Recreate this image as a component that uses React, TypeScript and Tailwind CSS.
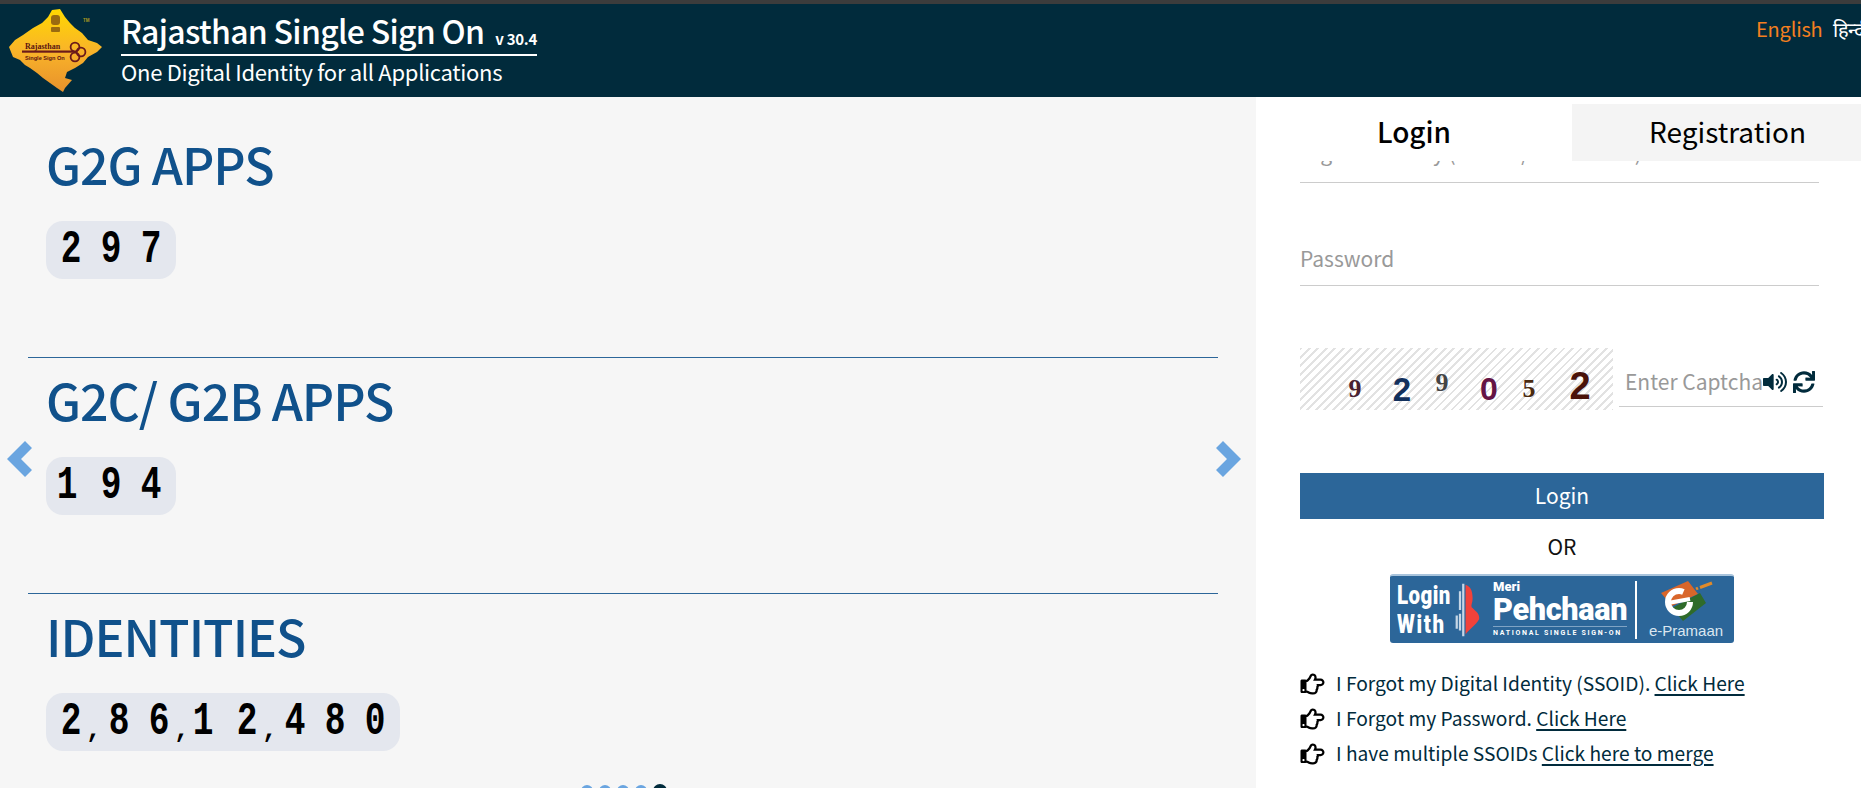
import { FaRegHandPointRight, FaSync, FaVolumeUp } from "react-icons/fa";

const stats = [
  { title: "G2G APPS", count: "297" },
  { title: "G2C/ G2B APPS", count: "194" },
  { title: "IDENTITIES", count: "2,86,12,480" },
];

const captcha = [
  { ch: "9", cls: "w-[46px] text-[26px] font-['Liberation_Serif'] text-[#4a2130]" },
  { ch: "2", cls: "w-[48px] text-[33px] font-['Liberation_Sans'] text-[#12305c]" },
  { ch: "9", cls: "w-[32px] text-[26px] font-['Liberation_Serif'] text-[#444444] -translate-y-[6px]" },
  { ch: "0", cls: "w-[62px] text-[32px] font-['Liberation_Sans'] text-[#641445]" },
  { ch: "5", cls: "w-[18px] text-[26px] font-['Liberation_Serif'] text-[#4a2a10]" },
  { ch: "2", cls: "w-[84px] text-[38px] font-['Liberation_Sans'] text-[#4a130a] -translate-y-[3px]" },
];

const help = [
  { text: "I Forgot my Digital Identity (SSOID).", link: "Click Here" },
  { text: "I Forgot my Password.", link: "Click Here" },
  { text: "I have multiple SSOIDs", link: "Click here to merge" },
];

function RajasthanLogo() {
  return (
    <svg viewBox="0 4 120 93" className="w-[120px] h-[93px] shrink-0">
      <defs>
        <linearGradient id="map" x1="0" y1="0" x2="0" y2="1">
          <stop offset="0" stopColor="#ffd800" />
          <stop offset="0.5" stopColor="#f9b429" />
          <stop offset="1" stopColor="#e8912c" />
        </linearGradient>
      </defs>
      <path
        d="M52 10 L60 9 L65 17 L70 23 L75 28 L82 33 L88 40 L97 43 L102 47 L97 52 L88 57 L83 63 L75 68 L67 72 L65 78 L72 80 L65 88 L63 92 L57 88 L50 83 L43 78 L37 73 L30 68 L25 65 L20 60 L13 57 L9 47 L15 40 L23 35 L33 28 L42 23 L48 17 Z"
        fill="url(#map)"
      />
      <rect x="51" y="15" width="9" height="10" rx="3" fill="#9a6b10" />
      <rect x="51" y="27" width="9" height="5" rx="1" fill="#9a6b10" />
      <text x="25" y="49" fontSize="8" fontWeight="700" fill="#5a1410" fontFamily="Liberation Serif">Rajasthan</text>
      <rect x="22" y="50.5" width="52" height="2.2" fill="#6b1a1a" />
      <text x="25" y="60" fontSize="5.6" fontWeight="700" fill="#5a1410" fontFamily="Liberation Sans">Single Sign On</text>
      <circle cx="75" cy="47" r="4.4" fill="none" stroke="#6b1a1a" strokeWidth="1.8" />
      <circle cx="81" cy="52" r="4.4" fill="none" stroke="#6b1a1a" strokeWidth="1.8" />
      <circle cx="75" cy="57" r="4.4" fill="none" stroke="#6b1a1a" strokeWidth="1.8" />
      <text x="83" y="22" fontSize="4.5" fontWeight="700" fill="#a89a20" fontFamily="Liberation Sans">TM</text>
    </svg>
  );
}

function Counter({ value }: { value: string }) {
  return (
    <div className="flex w-fit h-[58px] items-center rounded-[17px] bg-[#e4e7ee] px-[5px] font-['Liberation_Mono'] text-[46px] font-bold text-black">
      {value.split("").map((ch, i) =>
        ch === "," ? (
          <span key={i} className="w-[8px] text-[26px] text-center translate-y-[8px] -translate-x-[5px]">
            ,
          </span>
        ) : (
          <span key={i} className={`w-[40px] text-center scale-x-75 leading-none ${ch === "1" ? "-translate-x-[4px]" : ""}`}>
            {ch}
          </span>
        )
      )}
    </div>
  );
}

function MeriPehchaan() {
  return (
    <div className="flex w-[344px] h-[69px] items-center rounded-[3px] border-t-2 border-[#a9c4dc] bg-[#2c6699] pl-[7px] font-['Roboto'] text-white">
      <div className="w-[56px] text-[25px] font-black leading-[29px] tracking-[0.5px] scale-x-[0.82] origin-left">
        <div>Login</div>
        <div className="tracking-[2px]">With</div>
      </div>
      <svg viewBox="0 0 30 60" className="w-[28px] h-[58px]">
        <path d="M11 2 L11 58 M7.5 10 L7.5 30 M7.5 34 L7.5 52 M4 36 L4 50" stroke="#c6d6e6" strokeWidth="2.4" />
        <path d="M13.5 3 C20 5 21 12 21 18 C21 22 19 25 20 27 C24 31 29 34 28 40 C24 47 18 50 13.5 56 Z" fill="#f2423a" />
      </svg>
      <div className="ml-[12px] w-[134px]">
        <div className="text-[13px] font-black leading-[13px]">Meri</div>
        <div className="text-[32px] font-black leading-[33px] tracking-[-0.4px] scale-x-[0.96] origin-left whitespace-nowrap">Pehchaan</div>
        <div className="border-t border-[#7fa3c4] text-[7px] font-bold leading-[12px] tracking-[1.7px] whitespace-nowrap">NATIONAL SINGLE SIGN-ON</div>
      </div>
      <div className="ml-[8px] h-[58px] w-[2px] bg-white" />
      <div className="ml-[10px] flex w-[78px] flex-col items-center font-['Liberation_Sans']">
        <svg viewBox="0 0 56 42" className="h-[42px] w-[56px]">
          <path d="M3 13 L30 1 L40 14 L14 26 Z" fill="#d9662a" />
          <path d="M14 28 L42 13 L48 23 L25 41 Z" fill="#2f6b2a" />
          <path d="M38 9 L40 8 M42 7.5 L54 3" stroke="#e08a2a" strokeWidth="3" />
          <circle cx="21" cy="22" r="11" fill="none" stroke="#ffffff" strokeWidth="6" strokeDasharray="56 14" />
          <path d="M10 23 L32 19" stroke="#ffffff" strokeWidth="4" />
        </svg>
        <div className="text-[15px] leading-[17px] text-[#dbe6f0] whitespace-nowrap">e-Pramaan</div>
      </div>
    </div>
  );
}

export default function App() {
  return (
    <div className="relative h-[788px] w-full overflow-hidden bg-white font-['Noto_Sans_CJK_JP',sans-serif]">
      <div className="h-[4px] bg-[#3c3c3c]" />
      <header className="flex h-[93px] bg-[#012b3c] text-white">
        <RajasthanLogo />
        <div className="ml-[1px] w-[416px]">
          <div className="flex h-[52px] items-end justify-between border-b-2 border-white">
            <span className="mb-[2px] text-[32px] font-medium leading-[44px] tracking-[-0.7px] whitespace-nowrap">Rajasthan Single Sign On</span>
            <span className="mb-[4px] text-[15px] font-bold leading-[22px] tracking-[-0.3px] whitespace-nowrap">v 30.4</span>
          </div>
          <div className="-mt-px text-[22px] leading-[32px] tracking-[-0.3px] whitespace-nowrap">One Digital Identity for all Applications</div>
        </div>
        <div className="ml-auto flex h-[50px] w-[105px] shrink-0 items-center text-[20px] tracking-[-0.2px] whitespace-nowrap">
          <span className="text-[#f47f1f]">English</span>
          <span className="mx-[5px] h-[20px] w-px bg-white" />
          <span>हिन्दी</span>
        </div>
      </header>

      <div className="flex h-[691px]">
        <main className="w-[1256px] shrink-0 bg-[#f6f6f6] pt-[25px]">
          {stats.map((s, i) => (
            <section key={s.title} className={`mx-[28px] h-[236px] w-[1190px] pl-[18px] border-[#2c6699] ${i < 2 ? "border-b" : ""}`}>
              <h2 className="h-[99px] pt-[9px] text-[50px] font-medium leading-[64px] tracking-[-1px] text-[#10518b] whitespace-nowrap">{s.title}</h2>
              <Counter value={s.count} />
            </section>
          ))}
        </main>

        <aside className="flex min-w-0 flex-1 flex-col">
          <div className="mt-[7px] flex h-[57px] shrink-0 text-[28px] leading-[54px] text-black">
            <div className="w-[316px] text-center font-medium">Login</div>
            <div className="flex-1 bg-[#f4f4f4] pl-[22px] text-center">Registration</div>
          </div>
          <div className="flex-1 overflow-hidden pl-[44px] pr-[37px]">
            <input
              placeholder="Digital Identity (SSOID / Username)"
              className="-mt-[18px] block h-[40px] w-[519px] border-b border-[#cccccc] pb-[22px] text-[21px] outline-none placeholder:text-[#999999]"
            />
            <input
              placeholder="Password"
              className="mt-[62px] block h-[41px] w-[519px] border-b border-[#cccccc] pb-[14px] text-[21px] outline-none placeholder:text-[#999999]"
            />
            <div className="mt-[62px] flex">
              <div className="flex h-[62px] w-[313px] shrink-0 items-center overflow-hidden bg-[repeating-linear-gradient(135deg,#e2e2e2_0,#e2e2e2_2px,#ffffff_2px,#ffffff_6px)] pl-[32px] pt-[20px] font-bold">
                {captcha.map((c, i) => (
                  <span key={i} className={`shrink-0 text-center leading-none ${c.cls}`}>
                    {c.ch}
                  </span>
                ))}
              </div>
              <div className="ml-[6px] flex h-[59px] w-[204px] items-center border-b border-[#cccccc] pl-[6px] pt-[10px]">
                <span className="w-[138px] overflow-hidden text-[21px] text-[#999999] whitespace-nowrap">Enter Captcha</span>
                <FaVolumeUp className="h-[24px] w-[24px] shrink-0 text-[#012b3c]" />
                <FaSync className="ml-[6px] h-[22px] w-[22px] shrink-0 text-[#012b3c]" />
              </div>
            </div>
            <button className="mt-[63px] block h-[46px] w-[524px] bg-[#2c6699] text-[21px] text-white">Login</button>
            <div className="mt-[13px] w-[524px] text-center text-[21px] leading-[28px] text-[#111111]">OR</div>
            <div className="mt-[14px] ml-[90px]">
              <MeriPehchaan />
            </div>
            <ul className="mt-[23px] text-[19.2px] leading-[35px] text-[#012b3c]">
              {help.map((h) => (
                <li key={h.text} className="flex items-center">
                  <FaRegHandPointRight className="h-[24px] w-[25px] shrink-0 text-black" />
                  <span className="ml-[11px] whitespace-nowrap">
                    {h.text} <a className="underline decoration-2 underline-offset-[3px]">{h.link}</a>
                  </span>
                </li>
              ))}
            </ul>
          </div>
        </aside>
      </div>

      {/* carousel controls sit on top of the slide */}
      <svg viewBox="0 0 26 36" className="absolute left-[7px] top-[441px] h-[36px] w-[26px] fill-[#6aa5e0]">
        <path d="M18 0 L25 7 L14 18 L25 29 L18 36 L0 18 Z" />
      </svg>
      <svg viewBox="0 0 26 36" className="absolute left-[1215px] top-[441px] h-[36px] w-[26px] fill-[#6aa5e0]">
        <path d="M8 0 L1 7 L12 18 L1 29 L8 36 L26 18 Z" />
      </svg>
      <div className="absolute left-[581px] top-[785px] flex items-start gap-[6px]">
        {[0, 1, 2, 3].map((d) => (
          <span key={d} className="h-[12px] w-[12px] rounded-full bg-[#6aa5e0]" />
        ))}
        <span className="-mt-px h-[14px] w-[14px] rounded-full bg-[#012b3c]" />
      </div>
    </div>
  );
}
